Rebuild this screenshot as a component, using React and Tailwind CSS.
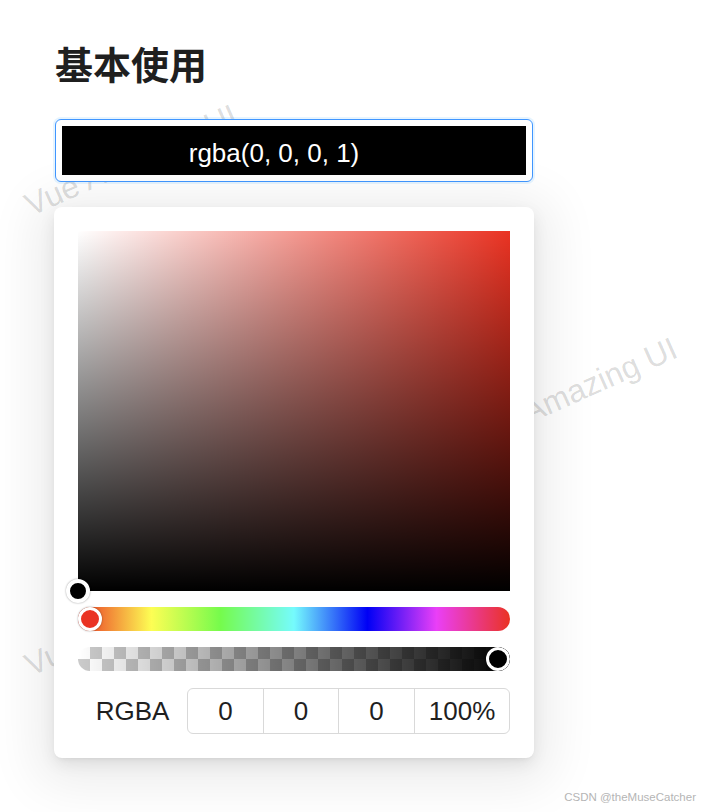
import React from 'react';

const watermarks = [
  { left: 'left-[33px]', top: 'top-[189px]' },
  { left: 'left-[473px]', top: 'top-[422px]' },
  { left: 'left-[33px]', top: 'top-[649px]' },
  { left: 'left-[473px]', top: 'top-[912px]' },
];

const hueBar =
  'bg-[linear-gradient(to_right,#ea3323_0%,#fdfe54_17%,#75fb4c_33%,#75fbfd_50%,#0000f5_67%,#ea3ff7_83%,#ea3323_100%)]';

const Watermark = ({ pos }) => (
  <div
    className={`absolute ${pos.left} ${pos.top} origin-bottom-left -rotate-[24deg] whitespace-nowrap text-[32px] leading-none text-black/15 select-none`}
  >
    Vue Amazing UI
  </div>
);

const App = () => {
  return (
    <div
      className="relative min-h-[812px] w-full overflow-hidden bg-white text-[#1f1f1f]"
      style={{ fontFamily: '"Liberation Sans", "Noto Sans CJK SC", sans-serif' }}
    >
      {/* watermark layer */}
      <div className="pointer-events-none absolute inset-0">
        {watermarks.map((pos, i) => (
          <Watermark key={i} pos={pos} />
        ))}
      </div>

      <div className="relative px-[55px] pt-[47px]">
        <h1 className="text-[38px] font-bold leading-none">基本使用</h1>

        {/* trigger */}
        <div className="mt-[34px] w-[478px] rounded-[6px] border border-[#4096ff] bg-white p-[6px] shadow-[0_0_0_2px_rgba(5,145,255,0.1)]">
          <div className="flex h-[49px] items-center justify-center bg-black pr-10 pt-[6px] text-[26px] text-white">
            rgba(0, 0, 0, 1)
          </div>
        </div>

        {/* panel */}
        <div className="-ml-px mt-[25px] w-[480px] rounded-lg bg-white p-6 shadow-[0_6px_16px_0_rgba(0,0,0,0.08),0_3px_6px_-4px_rgba(0,0,0,0.12),0_9px_50px_18px_rgba(0,0,0,0.075)]">
          {/* saturation */}
          <div className="relative h-[360px] w-[432px] bg-[#ea3323]">
            <div className="absolute inset-0 bg-[linear-gradient(to_right,#fff,rgba(255,255,255,0))]" />
            <div className="absolute inset-0 bg-[linear-gradient(to_top,#000,rgba(0,0,0,0))]" />
            <div className="absolute -bottom-3 -left-3 h-6 w-6 rounded-full border-[4px] border-white bg-black shadow-[0_0_2px_rgba(0,0,0,0.4)]" />
          </div>

          {/* hue */}
          <div className={`relative mt-4 h-6 w-[432px] rounded-full ${hueBar}`}>
            <div className="absolute left-0 top-0 h-6 w-6 rounded-full border-[3px] border-white bg-[#ea3323] shadow-[0_0_2px_rgba(0,0,0,0.4)]" />
          </div>

          {/* alpha */}
          <div className="relative mt-4 h-6 w-[432px] overflow-hidden rounded-full bg-[image:linear-gradient(to_right,rgba(0,0,0,0),#000),conic-gradient(#cbcbcb_25%,#fff_0_50%,#cbcbcb_0_75%,#fff_0)] bg-[length:100%_100%,24px_24px]">
            <div className="absolute right-0 top-0 h-6 w-6 rounded-full border-[3px] border-white bg-black shadow-[0_0_2px_rgba(0,0,0,0.4)]" />
          </div>

          {/* inputs */}
          <div className="mt-[17px] flex items-center">
            <div className="w-[109px] text-center text-[26px] leading-none">RGBA</div>
            <div className="flex h-[46px] flex-1 divide-x divide-[#d9d9d9] overflow-hidden rounded-md border border-[#d9d9d9] text-[26px]">
              <div className="flex w-[76px] items-center justify-center">0</div>
              <div className="flex w-[75px] items-center justify-center">0</div>
              <div className="flex w-[76px] items-center justify-center">0</div>
              <div className="flex flex-1 items-center justify-center">100%</div>
            </div>
          </div>
        </div>
      </div>

      <div className="absolute bottom-[6px] right-[22px] text-[11.5px] text-[#b5b5b5]">
        CSDN @theMuseCatcher
      </div>
    </div>
  );
};

export default App;
